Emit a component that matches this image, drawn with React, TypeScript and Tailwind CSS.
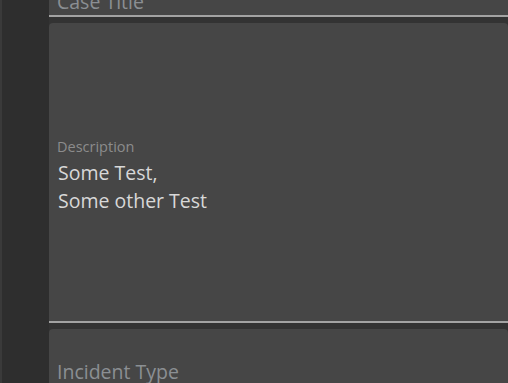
export default function App() {
  return (
    <div
      className="flex h-[383px] w-[508px] overflow-hidden bg-[#333333]"
      style={{ fontFamily: '"Open Sans", "Noto Sans", sans-serif' }}
    >
      <div className="w-[49px] shrink-0 border-l-2 border-[#3a3a3a] bg-[#2e2e2e]" />
      <div className="flex min-w-0 flex-1 flex-col gap-[6px]">
        <div className="-mt-[40px] flex h-[57px] shrink-0 items-end rounded-t-[4px] border-b-2 border-[#a3a3a3] bg-[#464646] px-2 pb-[1px]">
          <span className="text-[19.5px] leading-[24px] text-[#8b8f93]">Case Title</span>
        </div>
        <div className="flex h-[300px] shrink-0 flex-col justify-center rounded-t-[4px] border-b-2 border-[#a3a3a3] bg-[#464646] px-2 pt-[7px]">
          <span className="text-[14.5px] leading-[21px] text-[#8c8c8c]">Description</span>
          <div className="mt-[2px] pl-[1px] text-[19.5px] leading-[28px] text-[#d8d8d8]">
            <div>Some Test,</div>
            <div>Some other Test</div>
          </div>
        </div>
        <div className="flex h-[60px] shrink-0 flex-col rounded-t-[4px] bg-[#464646] px-2 pt-[31px]">
          <span className="text-[19.5px] leading-[24px] text-[#8b8f93]">Incident Type</span>
        </div>
      </div>
    </div>
  );
}
